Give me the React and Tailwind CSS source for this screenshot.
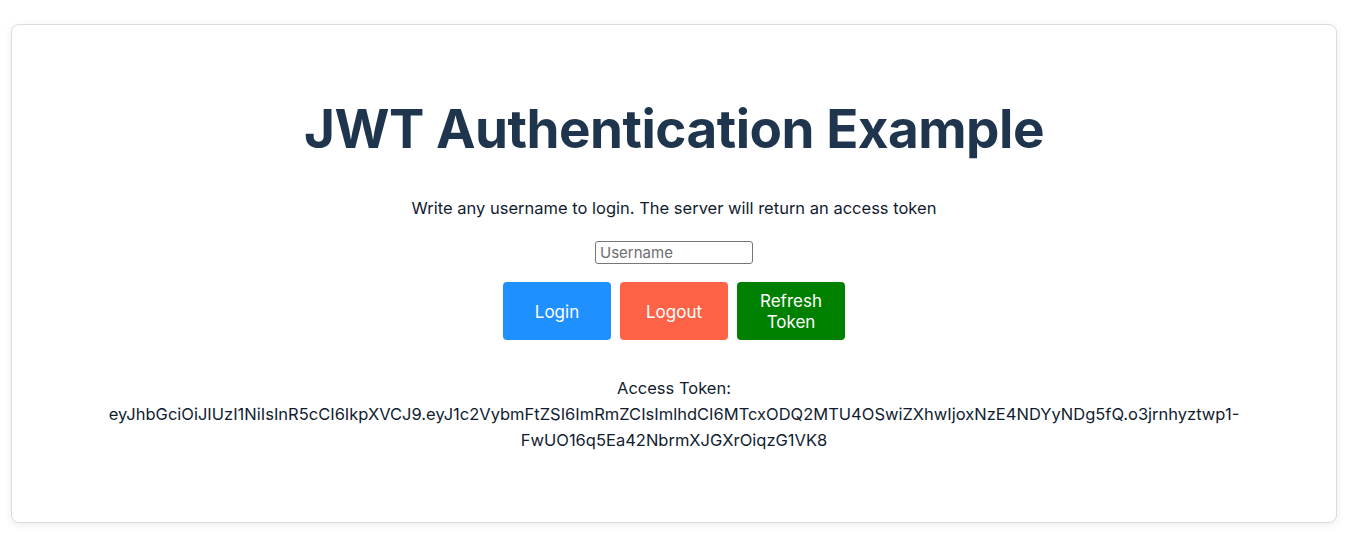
export default function App() {
  return (
    <div className="min-h-screen bg-white pt-[24px] pl-[11px] pr-[21px] font-['Inter',sans-serif]">
      <div className="h-[499px] rounded-lg border border-[#dcdcdc] bg-white shadow-[0_2px_8px_rgba(0,0,0,0.08)] px-10 text-center">
        <h1 className="mt-[72px] text-[53px] font-bold leading-[64px] tracking-[-0.5px] text-[#1e354d]">
          JWT Authentication Example
        </h1>
        <p className="mt-[35px] text-[16.5px] leading-[24px] text-[#111c30]">
          Write any username to login. The server will return an access token
        </p>
        <div className="mt-[21px] flex justify-center">
          <input
            type="text"
            placeholder="Username"
            className="h-[23px] w-[158px] rounded-[3px] border border-[#767676] px-[4px] text-[15px] text-[#111c30] placeholder-[#6e6e6e] outline-none"
          />
        </div>
        <div className="mt-[18px] flex justify-center gap-[9px]">
          <button className="w-[108px] h-[58px] rounded-[4px] bg-[#1e90ff] pt-[2px] text-[17px] leading-[21px] text-white">
            Login
          </button>
          <button className="w-[108px] h-[58px] rounded-[4px] bg-[#ff6347] pt-[2px] text-[17px] leading-[21px] text-white">
            Logout
          </button>
          <button className="w-[108px] h-[58px] rounded-[4px] bg-[#008000] px-4 pt-[2px] text-[17px] leading-[21px] text-white">
            Refresh Token
          </button>
        </div>
        <div className="mt-[35px] text-[16.5px] leading-[26px] text-[#111c30]">
          <p>Access Token:</p>
          <p className="break-words">
            eyJhbGciOiJIUzI1NiIsInR5cCI6IkpXVCJ9.eyJ1c2VybmFtZSI6ImRmZCIsImlhdCI6MTcxODQ2MTU4OSwiZXhwIjoxNzE4NDYyNDg5fQ.o3jrnhyztwp1-FwUO16q5Ea42NbrmXJGXrOiqzG1VK8
          </p>
        </div>
      </div>
    </div>
  )
}
